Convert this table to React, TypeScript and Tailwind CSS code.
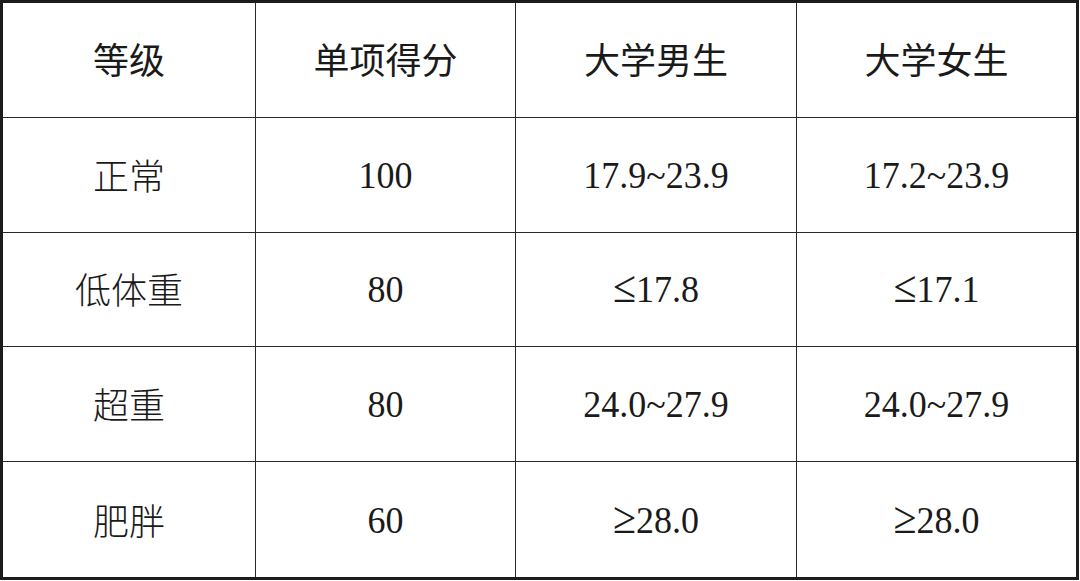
import React from "react";

const header = ["等级", "单项得分", "大学男生", "大学女生"];
const rows = [
  ["正常", "100", "17.9~23.9", "17.2~23.9"],
  ["低体重", "80", "≤17.8", "≤17.1"],
  ["超重", "80", "24.0~27.9", "24.0~27.9"],
  ["肥胖", "60", "≥28.0", "≥28.0"],
];

export default function App() {
  return (
    <div className="w-[1080px] h-[581px] bg-white">
      <div className="w-[1079px] h-[580px] border-[3px] border-[#1c1c1c] grid grid-cols-[253px_260px_281px_1fr] grid-rows-5 text-[#1a1a1a]">
        {header.map((h, i) => (
          <div
            key={h}
            className={`flex items-center justify-center pb-[4px] border-b border-[#2a2a2a] text-[36px] font-normal font-['Noto_Sans_CJK_SC',sans-serif] ${i < 3 ? "border-r" : ""}`}
          >
            {h}
          </div>
        ))}
        {rows.map((r, ri) =>
          r.map((c, ci) => (
            <div
              key={ri + "-" + ci}
              className={`flex items-center justify-center border-[#2a2a2a] ${ri < 3 ? "border-b" : ""} ${ci < 3 ? "border-r" : ""} ${ci === 0 ? "text-[36px] pb-[2px] font-light font-['Noto_Sans_CJK_SC',sans-serif]" : "text-[36px] font-['Liberation_Serif','Noto_Sans_CJK_SC',serif]"}`}
            >
              <span className={ci === 0 ? "" : "inline-block scale-y-[1.08]"}>
                {c.startsWith("≤") || c.startsWith("≥") ? (
                  <>
                    <span className="text-[42px] leading-none">{c[0]}</span>
                    {c.slice(1)}
                  </>
                ) : (
                  c
                )}
              </span>
            </div>
          ))
        )}
      </div>
    </div>
  );
}
